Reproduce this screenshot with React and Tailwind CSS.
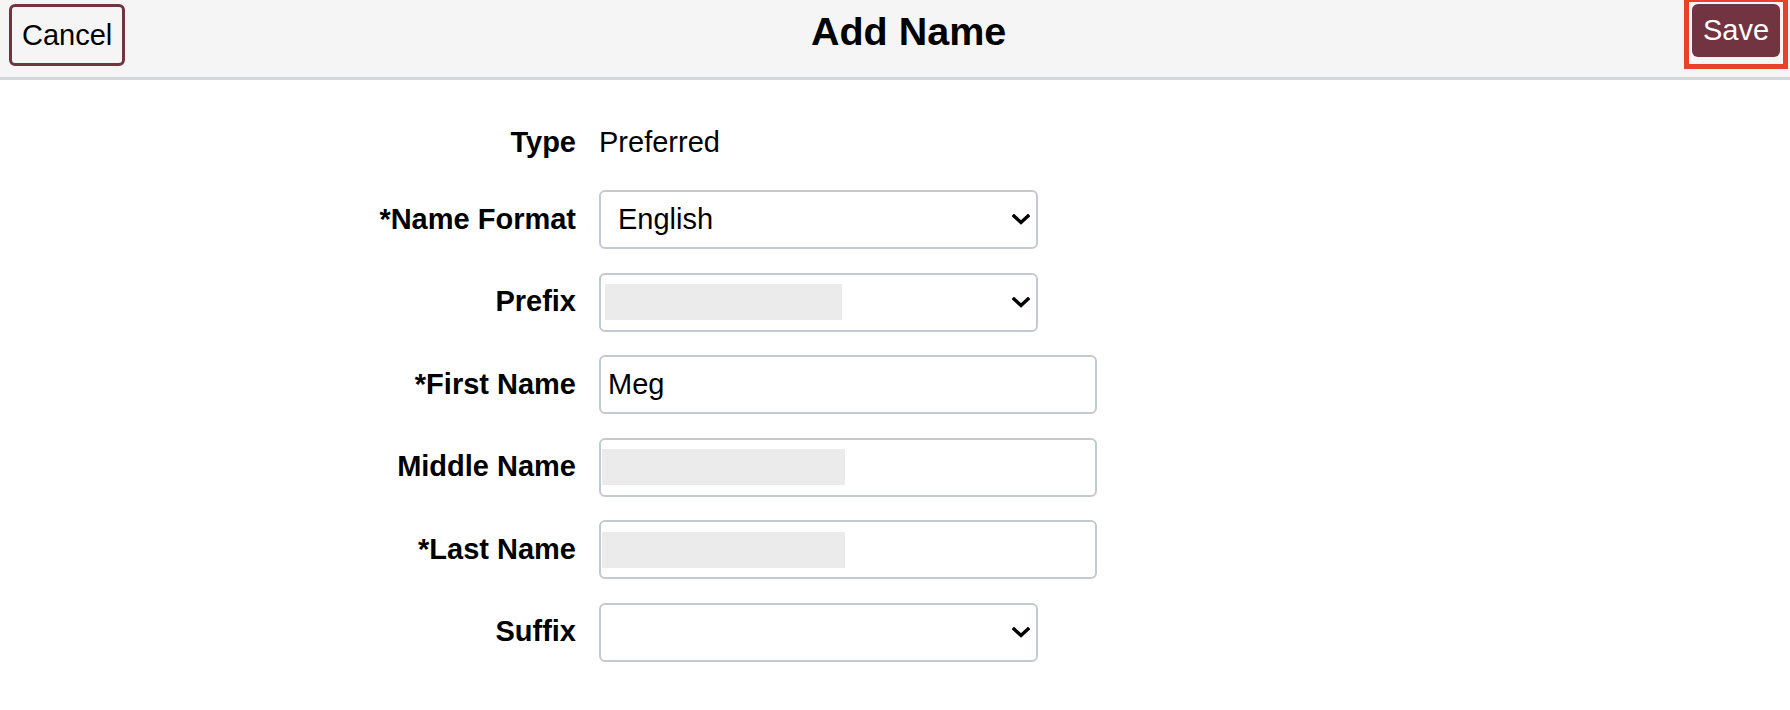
import React from "react";

const ChevronDown = () => (
  <svg width="18" height="11" viewBox="0 0 18 11" fill="none" className="shrink-0">
    <path d="M2 2L9 8.5L16 2" stroke="#000" strokeWidth="3.4" strokeLinecap="square" />
  </svg>
);

// grey block standing in for a hidden value
const Redacted = () => <div className="h-[36px] w-[237px] bg-[#ebebeb]" />;

function Row({ label, children, className = "h-[59px]" }) {
  return (
    <div className={`flex items-center ${className}`}>
      <div className="w-[576px] shrink-0 text-right font-bold">{label}</div>
      <div className="ml-[23px]">{children}</div>
    </div>
  );
}

function SelectBox({ value, redacted }) {
  return (
    <div
      className={`flex h-[59px] w-[439px] items-center justify-between rounded-[6px] border-2 border-[#c4c9cf] bg-white pr-[6px] ${
        redacted ? "pl-[4px]" : "pl-[17px]"
      }`}
    >
      {redacted ? <Redacted /> : <span>{value}</span>}
      <ChevronDown />
    </div>
  );
}

function TextBox({ value, redacted }) {
  return (
    <div
      className={`flex h-[59px] w-[498px] items-center rounded-[6px] border-2 border-[#c4c9cf] bg-white ${
        redacted ? "pl-[1px]" : "pl-[7px]"
      }`}
    >
      {redacted ? (
        <div className="h-[36px] w-[243px] bg-[#ebebeb]" />
      ) : (
        <span>{value}</span>
      )}
    </div>
  );
}

export default function App() {
  return (
    <div className="min-h-[710px] bg-white font-['Liberation_Sans',Arial,sans-serif] text-[29px] text-black">
      {/* top bar */}
      <header className="relative flex h-[80px] items-start justify-between border-b-[3px] border-[#d3d6da] bg-[#f5f5f5] pl-[9px] pr-[10px] pt-[4px]">
        <button className="h-[62px] rounded-[6px] border-[3px] border-[#733442] px-[10px] leading-none text-black">
          Cancel
        </button>
        <h1 className="-mt-[2px] text-[39.5px] font-bold leading-[58px]">Add Name</h1>
        <button className="h-[53px] w-[88px] rounded-[6px] bg-[#733442] leading-none text-white">
          Save
        </button>
        {/* highlight box drawn around Save */}
        <div className="pointer-events-none absolute right-[2px] top-[-3px] h-[72px] w-[104px] border-[5px] border-[#e9422b]" />
      </header>

      <main className="flex flex-col pt-[33px]">
        <Row label="Type">
          <span>Preferred</span>
        </Row>
        <div className="mt-[18px] flex flex-col gap-[23.5px]">
          <Row label="*Name Format">
            <SelectBox value="English" />
          </Row>
          <Row label="Prefix">
            <SelectBox redacted />
          </Row>
          <Row label="*First Name">
            <TextBox value="Meg" />
          </Row>
          <Row label="Middle Name">
            <TextBox redacted />
          </Row>
          <Row label="*Last Name">
            <TextBox redacted />
          </Row>
          <Row label="Suffix">
            <SelectBox value="" />
          </Row>
        </div>
      </main>
    </div>
  );
}
